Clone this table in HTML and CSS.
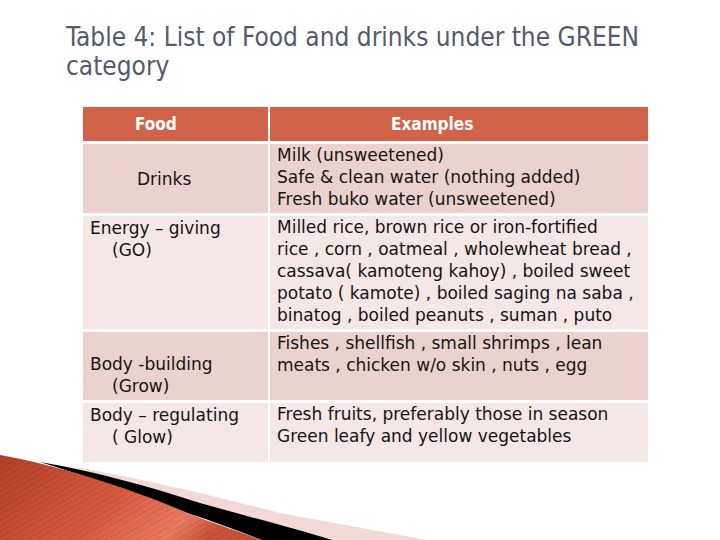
FILE: index.html
```html
<!DOCTYPE html>
<html>
<head>
<meta charset="utf-8">
<link rel="stylesheet" href="styles.css">
</head>
<body>
<div class="slide">
  <h1 class="title">Table 4: List of Food and drinks under the GREEN<br>category</h1>
  <div class="table">
    <div class="cell head head-food">Food</div>
    <div class="cell head head-ex">Examples</div>

    <div class="cell dark c1 mid drinks">Drinks</div>
    <div class="cell dark c2">Milk (unsweetened)<br>Safe &amp; clean water (nothing added)<br>Fresh buko water (unsweetened)</div>

    <div class="cell light c1"><p class="hang">Energy – giving<br>(GO)</p></div>
    <div class="cell light c2">Milled rice, brown rice or iron-fortified<br>rice , corn , oatmeal , wholewheat bread ,<br>cassava( kamoteng kahoy) , boiled sweet<br>potato ( kamote) , boiled saging na saba ,<br>binatog , boiled peanuts , suman , puto</div>

    <div class="cell dark c1 bottom"><p class="hang">Body -building<br>(Grow)</p></div>
    <div class="cell dark c2">Fishes , shellfish , small shrimps , lean<br>meats , chicken w/o skin , nuts , egg</div>

    <div class="cell light c1"><p class="hang">Body – regulating<br>( Glow)</p></div>
    <div class="cell light c2">Fresh fruits, preferably those in season<br>Green leafy and yellow vegetables</div>
  </div>
  <svg class="deco" width="720" height="100" viewBox="0 440 720 100" xmlns="http://www.w3.org/2000/svg">
    <defs>
      <linearGradient id="og" x1="0" y1="0" x2="1" y2="0.3">
        <stop offset="0" stop-color="#b13f28"/>
        <stop offset="0.55" stop-color="#d85a40"/>
        <stop offset="0.85" stop-color="#ea7a62"/>
        <stop offset="1" stop-color="#c9503a"/>
      </linearGradient>
      <pattern id="hatch" width="5" height="5" patternUnits="userSpaceOnUse" patternTransform="rotate(60)">
        <rect width="1.2" height="5" fill="#000" fill-opacity="0.07"/>
      </pattern>
    </defs>
    <path d="M70 466 C 150 480, 230 500, 280 513 L 427 540 L 330 540 C 280 525, 230 510, 190 503 C 150 490, 110 478, 70 466 Z" fill="#f3d9d6"/>
    <path d="M40 462 C 95 471, 150 487, 200 503 C 250 517, 300 530, 332 540 L 262 540 C 230 528, 210 520, 190 514 C 130 492, 80 474, 40 462 Z" fill="#000"/>
    <path d="M0 455 C 60 466, 130 488, 190 514 C 215 524, 240 532, 262 540 L 0 540 Z" fill="url(#og)"/>
    <path d="M0 455 C 60 466, 130 488, 190 514 C 215 524, 240 532, 262 540 L 0 540 Z" fill="url(#hatch)"/>
  </svg>
</div>
</body>
</html>
```

FILE: styles.css
```css
html, body {
  margin: 0;
  padding: 0;
  background: #ffffff;
}

.slide {
  position: relative;
  width: 720px;
  height: 540px;
  overflow: hidden;
  font-family: "DejaVu Sans", sans-serif;
}

.title {
  margin: 0;
  padding: 23px 0 0 66px;
  font-family: "DejaVu Sans Condensed", "DejaVu Sans", sans-serif;
  font-stretch: condensed;
  font-size: 26px;
  font-weight: normal;
  line-height: 29px;
  color: #555a6e;
}

.table {
  margin: 26px 0 0 83px;
  display: grid;
  grid-template-columns: 185px 378px;
  grid-template-rows: 34px 69px 113px 68px 59px;
  column-gap: 2px;
  row-gap: 3px;
  font-size: 17px;
  line-height: 22px;
  color: #141414;
  white-space: nowrap;
}

.cell {
  box-sizing: border-box;
}

.head {
  background: #d0634a;
  color: #ffffff;
  font-family: "DejaVu Sans Condensed", "DejaVu Sans", sans-serif;
  font-stretch: condensed;
  font-weight: bold;
  display: flex;
  align-items: center;
}

.head-food {
  padding-left: 52px;
}

.head-ex {
  padding-left: 121px;
}

.dark {
  background: #ecd2ce;
}

.light {
  background: #f5e7e6;
}

.c1 {
  padding: 1px 4px 0 7px;
}

.c2 {
  padding: 0 4px 0 7px;
}

.mid {
  display: flex;
  align-items: center;
}

.drinks {
  padding-left: 54px;
}

.bottom {
  display: flex;
  align-items: flex-end;
  padding-bottom: 3px;
}

.hang {
  margin: 0;
  padding-left: 22px;
  text-indent: -22px;
}

.deco {
  position: absolute;
  left: 0;
  top: 440px;
}
```
